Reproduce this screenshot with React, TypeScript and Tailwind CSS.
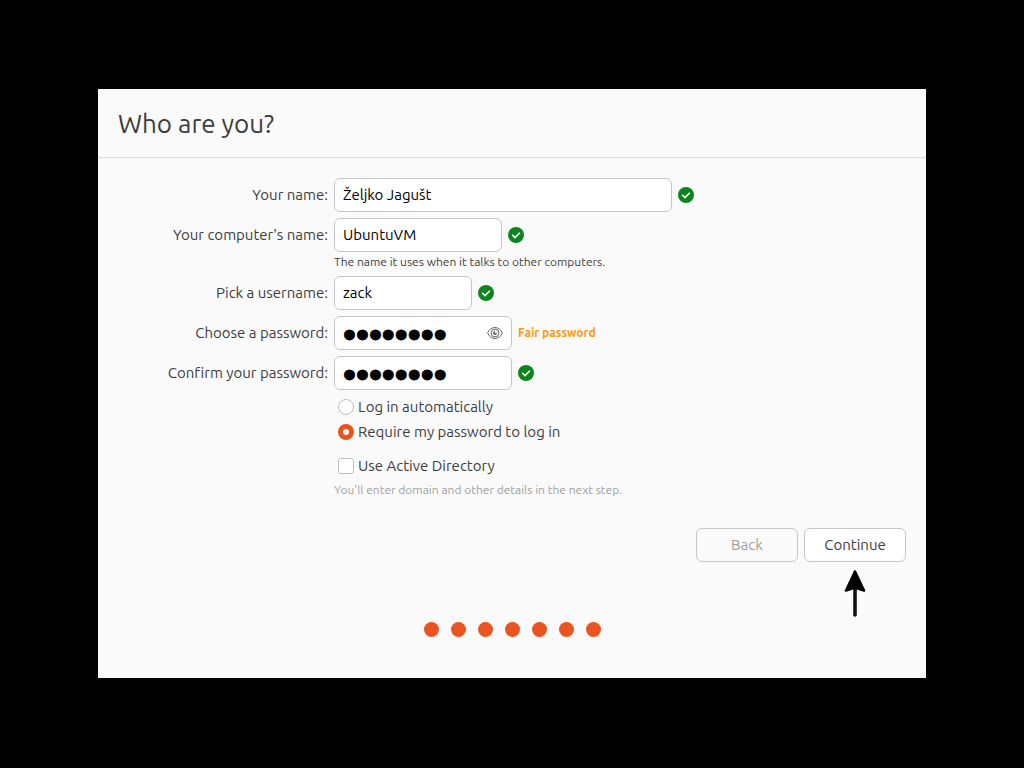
import { useState, type InputHTMLAttributes, type ReactNode } from "react";

function ValidMark() {
  return (
    <svg className="h-4 w-4 shrink-0" viewBox="0 0 16 16" role="img" aria-label="Valid">
      <circle cx="8" cy="8" r="8" fill="#0e8420" />
      <path d="M4.2 7.900 7 10.600l4.900-4.900" fill="none" stroke="#fff" strokeWidth="1.5" />
    </svg>
  );
}

function EyeIcon() {
  return (
    <svg className="h-4 w-4" viewBox="0 0 16 16" fill="none" stroke="#666" aria-hidden="true">
      <path d="M.6 8C2 4.800 4.700 2.500 8 2.500S14 4.800 15.400 8C14 11.200 11.300 13.500 8 13.500S2 11.200.6 8Z" />
      <circle cx="8" cy="8" r="3.900" />
      <path d="M8 6a2 2 0 1 0 2 2H8Z" fill="#666" stroke="none" />
    </svg>
  );
}

type FieldProps = InputHTMLAttributes<HTMLInputElement> & {
  id: string;
  label: string;
  boxClass: string;
  inner?: ReactNode;
  status?: ReactNode;
};

function Field({ id, label, boxClass, inner, status, type = "text", ...rest }: FieldProps) {
  const textClass =
    type === "password"
      ? "pt-1 font-['Liberation_Sans',sans-serif] text-[37px] [-webkit-text-stroke:1px_#000]"
      : "pb-0.5 text-[15px]";
  return (
    <div className="flex items-center gap-1.5">
      <label htmlFor={id} className="w-[210px] shrink-0 text-right">
        {label}
      </label>
      <div className={`relative h-[34px] ${boxClass}`}>
        <input
          id={id}
          type={type}
          className={`block h-full w-full rounded-md border border-[#c6c6c6] bg-white px-2 text-black outline-none focus:border-[#e95420] ${textClass}`}
          {...rest}
        />
        {inner}
      </div>
      {status}
    </div>
  );
}

const steps = [1, 2, 3, 4, 5, 6, 7];

export default function App() {
  const [visible, setVisible] = useState(false);
  const [login, setLogin] = useState("password");

  return (
    <div className="flex min-h-screen items-center justify-center bg-black pb-px font-['Ubuntu','Noto_Sans',sans-serif] text-[15px] leading-[22px] text-[#3d3d3d] [font-variant-ligatures:none]">
      <main className="w-full max-w-[828px] bg-[#fafafa]">
        <header className="border-b border-[#dcdcdc] px-5 pt-[17px] pb-[15px]">
          <h1 className="text-[26px] leading-9">Who are you?</h1>
        </header>
        <form className="px-5 pt-5 pb-[41px]" onSubmit={(e) => e.preventDefault()}>
          <div className="flex flex-col gap-1.5">
            <Field id="name" label="Your name:" boxClass="w-[338px]" defaultValue="Željko Jagušt" status={<ValidMark />} />
            <Field id="host" label="Your computer's name:" boxClass="w-[168px]" defaultValue="UbuntuVM" status={<ValidMark />} />
          </div>
          <p className="mb-1 ml-[216px] text-xs leading-5">The name it uses when it talks to other computers.</p>
          <div className="flex flex-col gap-1.5">
            <Field id="user" label="Pick a username:" boxClass="w-[138px]" defaultValue="zack" status={<ValidMark />} />
            <Field
              id="password"
              label="Choose a password:"
              type={visible ? "text" : "password"}
              boxClass="w-[178px]"
              defaultValue="ubuntu22"
              inner={
                <button
                  type="button"
                  aria-label="Show password"
                  className="absolute inset-y-0 right-[9px] flex items-center"
                  onClick={() => setVisible(!visible)}
                >
                  <EyeIcon />
                </button>
              }
              status={<span className="text-xs font-bold text-[#f99b11]">Fair password</span>}
            />
            <Field id="confirm" label="Confirm your password:" type="password" boxClass="w-[178px]" defaultValue="ubuntu22" status={<ValidMark />} />
          </div>
          <div className="mt-1 ml-[220px]">
            {[
              { value: "auto", text: "Log in automatically" },
              { value: "password", text: "Require my password to log in" },
            ].map((o) => (
              <label key={o.value} className="flex h-[25px] items-center gap-1">
                <input
                  type="radio"
                  name="login"
                  checked={login === o.value}
                  onChange={() => setLogin(o.value)}
                  className="h-4 w-4 appearance-none rounded-full border border-[#bdbdbd] bg-white checked:border-[5px] checked:border-[#e95420]"
                />
                {o.text}
              </label>
            ))}
            <label className="mt-2 flex h-7 items-center gap-1">
              <input
                type="checkbox"
                className="h-4 w-4 appearance-none rounded-[3px] border border-[#bdbdbd] bg-white checked:border-[#e95420] checked:bg-[#e95420]"
              />
              Use Active Directory
            </label>
          </div>
          <p className="ml-[216px] text-xs leading-5 text-[#a0a0a0]">You'll enter domain and other details in the next step.</p>
          <div className="mt-7 flex justify-end gap-1.5">
            <button type="button" disabled className="h-[34px] w-[102px] rounded-md border border-[#c6c6c6] text-[#a0a0a0]">
              Back
            </button>
            <div className="relative">
              <button type="submit" className="block h-[34px] w-[102px] rounded-md border border-[#c6c6c6] bg-white">
                Continue
              </button>
              <svg className="absolute top-full left-1/2 mt-2 h-12 w-6 -translate-x-1/2" viewBox="0 0 24 48" aria-hidden="true">
                <path d="M12 17v28" stroke="#111" strokeWidth="3.600" strokeLinecap="round" />
                <path
                  d="M12 1.500 3 20.500 12 17.500l9 3Z"
                  fill="#000"
                  stroke="#000"
                  strokeWidth="2.500"
                  strokeLinejoin="round"
                />
              </svg>
            </div>
          </div>
          <ol className="mt-15 flex justify-center gap-3" aria-label="Installation progress">
            {steps.map((s) => (
              <li key={s} className="h-[15px] w-[15px] rounded-full bg-[#e95420]" />
            ))}
          </ol>
        </form>
      </main>
    </div>
  );
}
